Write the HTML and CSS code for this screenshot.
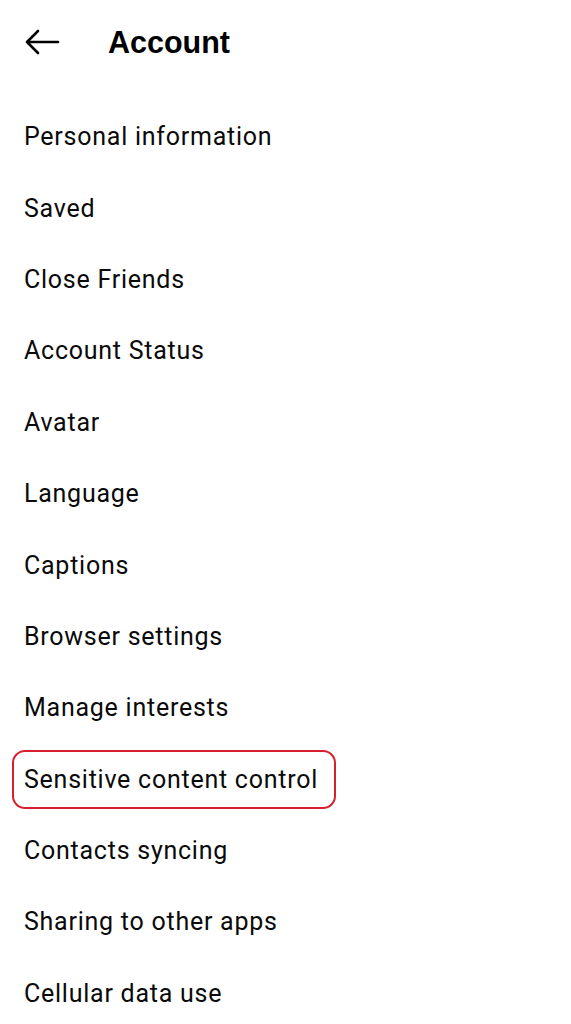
FILE: index.html
```html
<!DOCTYPE html>
<html>
<head>
<meta charset="utf-8">
<link rel="stylesheet" href="styles.css">
</head>
<body>
<div class="screen">
  <header class="topbar">
    <svg class="back" width="36" height="26" viewBox="0 0 36 26">
      <path d="M14 2 L3 13 L14 24 M3 13 H34" fill="none" stroke="#000" stroke-width="2.6" stroke-linecap="round" stroke-linejoin="round"/>
    </svg>
    <h1 class="title">Account</h1>
  </header>
  <ul class="menu">
    <li class="item">Personal information</li>
    <li class="item">Saved</li>
    <li class="item">Close Friends</li>
    <li class="item">Account Status</li>
    <li class="item">Avatar</li>
    <li class="item">Language</li>
    <li class="item">Captions</li>
    <li class="item">Browser settings</li>
    <li class="item">Manage interests</li>
    <li class="item"><span class="highlight">Sensitive content control</span></li>
    <li class="item">Contacts syncing</li>
    <li class="item">Sharing to other apps</li>
    <li class="item">Cellular data use</li>
  </ul>
</div>
</body>
</html>
```

FILE: styles.css
```css
html, body {
  margin: 0;
  padding: 0;
  background: #fff;
}
body {
  font-family: Roboto, "Noto Sans", sans-serif;
  color: #0a0a0a;
}
.screen {
  width: 571px;
  height: 1024px;
  overflow: hidden;
}
.topbar {
  height: 84px;
  display: flex;
  align-items: center;
  padding-left: 24px;
  gap: 48px;
}
.back {
  display: block;
  flex: none;
}
.title {
  margin: 0;
  font-family: "Liberation Sans", Arial, sans-serif;
  font-size: 30.5px;
  font-weight: 700;
  color: #000;
}
.menu {
  list-style: none;
  margin: 0;
  padding: 17px 0 0 24px;
}
.item {
  height: 71.4px;
  display: flex;
  align-items: center;
  font-size: 25px;
  letter-spacing: 0.75px;
  color: #0a0a0a;
}
.highlight {
  position: relative;
}
.highlight::after {
  content: "";
  position: absolute;
  left: -12px;
  right: -18px;
  top: -15px;
  bottom: -15px;
  border: 2.5px solid #d7202d;
  border-radius: 13px;
}
```
